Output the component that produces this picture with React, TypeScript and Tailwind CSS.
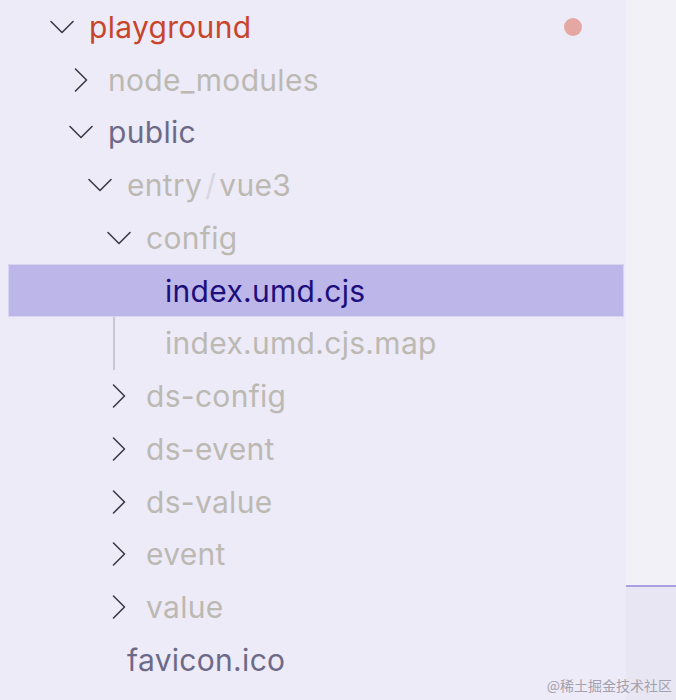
import React from "react";

type Node = {
  label: React.ReactNode;
  level: number;
  kind: "open" | "closed" | "file";
  tone: "accent" | "dim" | "normal" | "selected";
};

const rows: Node[] = [
  { label: "playground", level: 0, kind: "open", tone: "accent" },
  { label: "node_modules", level: 1, kind: "closed", tone: "dim" },
  { label: "public", level: 1, kind: "open", tone: "normal" },
  {
    label: (
      <>
        entry<span className="mx-[3px] text-[#d9d6de]">/</span>vue3
      </>
    ),
    level: 2,
    kind: "open",
    tone: "dim",
  },
  { label: "config", level: 3, kind: "open", tone: "dim" },
  { label: "index.umd.cjs", level: 4, kind: "file", tone: "selected" },
  { label: "index.umd.cjs.map", level: 4, kind: "file", tone: "dim" },
  { label: "ds-config", level: 3, kind: "closed", tone: "dim" },
  { label: "ds-event", level: 3, kind: "closed", tone: "dim" },
  { label: "ds-value", level: 3, kind: "closed", tone: "dim" },
  { label: "event", level: 3, kind: "closed", tone: "dim" },
  { label: "value", level: 3, kind: "closed", tone: "dim" },
  { label: "favicon.ico", level: 2, kind: "file", tone: "normal" },
];

const toneClass = {
  accent: "text-[#c8452b]",
  dim: "text-[#bcb9b3]",
  normal: "text-[#6d6a88]",
  selected: "text-[#1c0e7c]",
};

function Chevron({ open }: { open: boolean }) {
  return (
    <svg width="24" height="24" viewBox="0 0 24 24" fill="none" stroke="#3b3a4a" strokeWidth="1.6" strokeLinecap="round" strokeLinejoin="round">
      {open ? <path d="M1 6.5l11 11 11-11" /> : <path d="M6.5 1l11 11-11 11" />}
    </svg>
  );
}

function Row({ node, index }: { node: Node; index: number }) {
  const selected = node.tone === "selected";
  return (
    <div
      className={
        "relative flex h-[52.75px] items-center " +
        (selected ? "ml-[8px] mr-[2px] border border-[#d9d4f1] bg-[#bdb6e9]" : "")
      }
      style={{ paddingLeft: 50 + node.level * 19 - (selected ? 9 : 0) }}
    >
      {node.kind === "file" ? (
        <div className="w-[39px] shrink-0" />
      ) : (
        <div className="mr-[15px] flex h-[24px] w-[24px] shrink-0 items-center justify-center">
          <Chevron open={node.kind === "open"} />
        </div>
      )}
      <span className={"text-[30px] leading-none tracking-[0.3px] " + toneClass[node.tone]}>{node.label}</span>
      {index === 0 && <div className="ml-auto mr-[44px] h-[18px] w-[18px] rounded-full bg-[#e4a7a2]" />}
    </div>
  );
}

export default function App() {
  return (
    <div className="relative flex h-[700px] w-[676px] overflow-hidden bg-[#edebf8]" style={{ fontFamily: "Inter, 'Noto Sans', sans-serif" }}>
      <div className="w-[626px] shrink-0">
        <div className="pt-[0.5px]">
          {rows.slice(0, 5).map((n, i) => (
            <Row key={i} node={n} index={i} />
          ))}
          <div className="relative">
            <div className="absolute left-[113px] top-0 h-[106px] w-[1.5px] bg-[#c9c6d2]" />
            {rows.slice(5, 7).map((n, i) => (
              <Row key={i + 5} node={n} index={i + 5} />
            ))}
          </div>
          {rows.slice(7).map((n, i) => (
            <Row key={i + 7} node={n} index={i + 7} />
          ))}
        </div>
      </div>
      <div className="flex flex-1 flex-col">
        <div className="h-[585px] bg-[#f2f1f8]" />
        <div className="h-[2px] bg-[#a99fe1]" />
        <div className="flex-1 bg-[#e8e6f2]" />
      </div>
      <div
        className="absolute bottom-[4px] right-[4px] text-[14px] text-[#a3a1ad]"
        style={{ fontFamily: "'Noto Sans CJK SC', sans-serif" }}
      >
        @稀土掘金技术社区
      </div>
    </div>
  );
}
